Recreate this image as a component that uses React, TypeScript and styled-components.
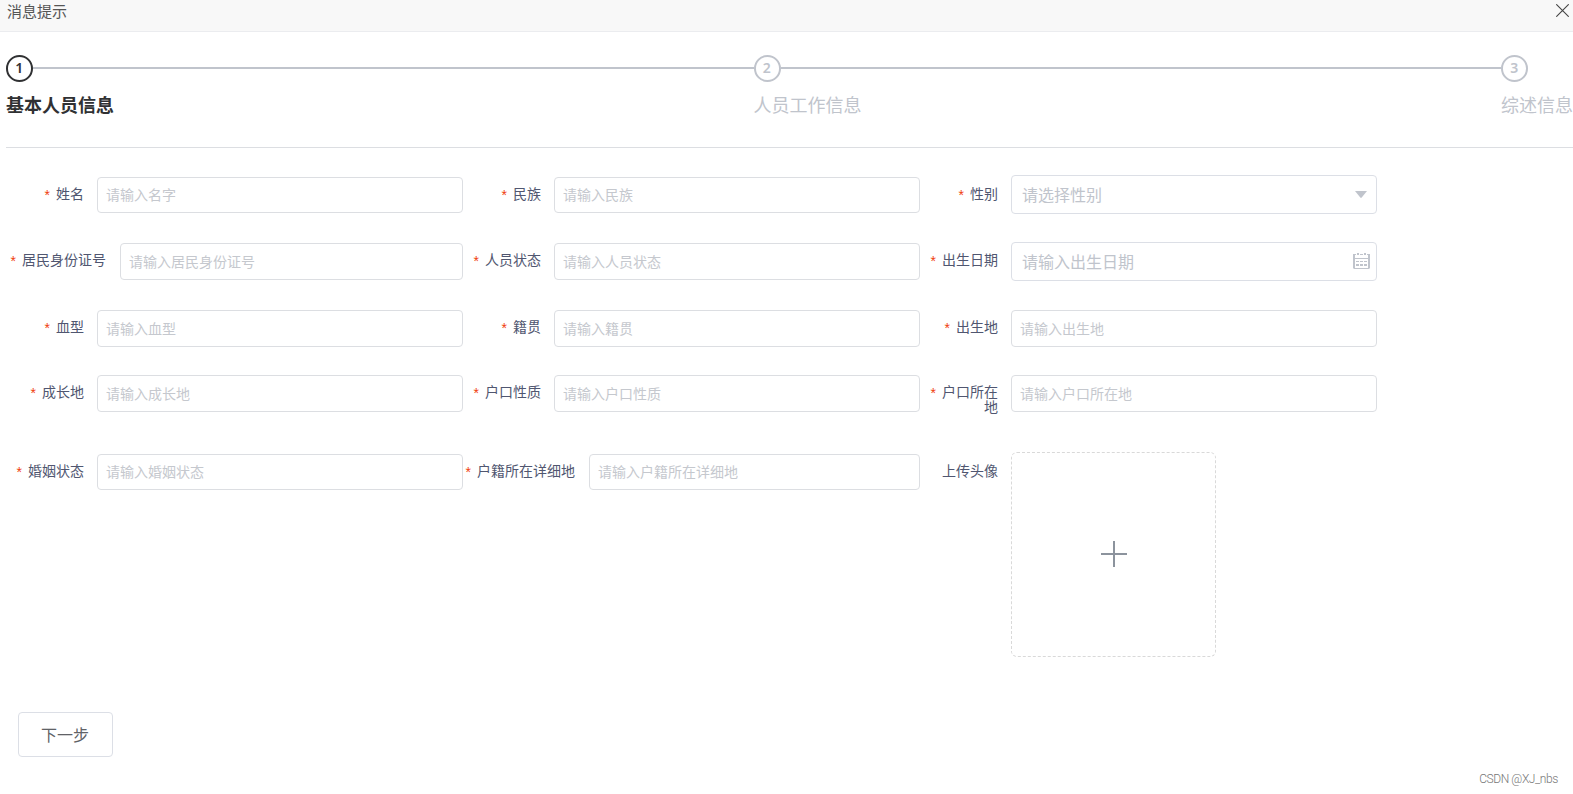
import React from "react";
import styled, { createGlobalStyle } from "styled-components";

const GlobalStyle = createGlobalStyle`
  * { box-sizing: border-box; }
  body {
    margin: 0;
    background: #fff;
    overflow: hidden;
    font-family: "Noto Sans CJK SC", "Liberation Sans", sans-serif;
    font-size: 14px;
    color: #505670;
  }
`;

const Dialog = styled.div`
  display: flex;
  flex-direction: column;
  width: 100%;
  height: 794px;
`;

const Header = styled.header`
  display: flex;
  justify-content: space-between;
  align-items: flex-start;
  height: 32px;
  padding: 4px 4px 0 7px;
  background: #f8f8f8;
  border-bottom: 1px solid #ebecef;
`;

const Title = styled.h1`
  margin: -1px 0 0;
  font-size: 15px;
  line-height: 15px;
  font-weight: 400;
  color: #555;
`;

const CloseButton = styled.button`
  display: flex;
  padding: 0;
  border: 0;
  background: none;
`;

const Body = styled.main`
  display: flex;
  flex-direction: column;
  flex: 1;
  padding-left: 6px;
`;

const Steps = styled.ol`
  display: flex;
  margin: 0;
  padding: 23px 0 0;
  list-style: none;
  height: 115px;
`;

const StepItem = styled.li<{ $active?: boolean; $last?: boolean }>`
  flex: ${(p) => (p.$last ? "0 0 72px" : "1 1 0")};
  color: ${(p) => (p.$active ? "#303133" : "#c0c4cc")};
`;

const StepHead = styled.div`
  display: flex;
  height: 27px;
`;

const StepCircle = styled.span`
  display: flex;
  align-items: center;
  justify-content: center;
  flex: none;
  width: 27.4px;
  height: 27px;
  padding: 0 1px 1px 0;
  border: 2px solid currentColor;
  border-radius: 50%;
  font: 600 14px/1 "Noto Sans", sans-serif;
`;

const StepLine = styled.span`
  flex: 1;
  height: 2px;
  margin-top: 12px;
  background: #c0c4cc;
`;

const StepTitle = styled.div<{ $active?: boolean }>`
  margin-top: 12px;
  font-size: 18px;
  line-height: 20px;
  font-weight: ${(p) => (p.$active ? 700 : 400)};
  white-space: nowrap;
`;

const Divider = styled.hr`
  width: 100%;
  height: 1px;
  margin: 0 0 27px;
  border: 0;
  background: #dcdee2;
`;

const Row = styled.div<{ $height: number }>`
  display: grid;
  grid-template-columns: repeat(3, 457px);
  height: ${(p) => p.$height}px;
`;

const Field = styled.div`
  display: flex;
  align-items: flex-start;
  min-width: 0;
`;

const Label = styled.label<{ $top: number; $width?: number }>`
  flex: none;
  width: ${(p) => p.$width ?? 91}px;
  padding: ${(p) => p.$top}px ${(p) => (p.$width ? 14 : 13)}px 0 0;
  line-height: 15px;
  text-align: right;
`;

const Star = styled.span`
  margin-right: 6px;
  font-family: "Liberation Sans", sans-serif;
  line-height: 0;
  vertical-align: -1px;
  color: #f03c0c;
`;

const TextInput = styled.input<{ $top: number; $height: number }>`
  flex: 1;
  min-width: 0;
  height: ${(p) => p.$height}px;
  margin: ${(p) => p.$top}px 0 0;
  padding: 0 8px 2px;
  border: 1px solid #dcdee2;
  border-radius: 4px;
  font: inherit;
  background: #fff;
  outline: none;
  &::placeholder { color: #c5c8ce; opacity: 1; }
`;

const PickerBox = styled.div`
  display: flex;
  flex: 1;
  align-items: center;
  justify-content: space-between;
  height: 39px;
  padding: 0 6px 2px 10px;
  border: 1px solid #dcdfe6;
  border-radius: 4px;
  font-size: 16px;
  line-height: 20px;
  color: #c0c4cc;
`;

const Caret = styled.svg`
  margin: 2px 3px 0 0;
`;

const Calendar = styled.svg`
  margin-top: 1px;
`;

const Upload = styled.div`
  display: flex;
  align-items: center;
  justify-content: center;
  width: 205px;
  height: 205px;
  padding-bottom: 2px;
  border: 1px dashed #d9d9d9;
  border-radius: 6px;
`;

const Footer = styled.footer`
  display: flex;
  justify-content: space-between;
  align-items: flex-start;
  padding: 55px 15px 0 12px;
`;

const NextButton = styled.button`
  width: 95px;
  height: 45px;
  padding: 0 1px 2px 0;
  border: 1px solid #dcdfe6;
  border-radius: 4px;
  background: #fff;
  font: 16px "Noto Sans CJK SC", sans-serif;
  color: #606266;
`;

const Watermark = styled.span`
  display: flex;
  justify-content: flex-end;
  width: 79px;
  margin-top: 60px;
  font: 300 12px/15px Roboto, sans-serif;
  letter-spacing: -0.4px;
  white-space: nowrap;
  color: #777;
`;

type FieldSpec = {
  label: string;
  placeholder?: string;
  kind?: "select" | "date" | "upload";
  labelWidth?: number;
};

type RowSpec = {
  height: number;
  labelTop: number;
  inputTop: number;
  inputHeight: number;
  fields: FieldSpec[];
};

const rows: RowSpec[] = [
  {
    height: 67, labelTop: 11, inputTop: 2, inputHeight: 36,
    fields: [
      { label: "姓名", placeholder: "请输入名字" },
      { label: "民族", placeholder: "请输入民族" },
      { label: "性别", placeholder: "请选择性别", kind: "select" },
    ],
  },
  {
    height: 67, labelTop: 10, inputTop: 1, inputHeight: 37,
    fields: [
      { label: "居民身份证号", placeholder: "请输入居民身份证号", labelWidth: 114 },
      { label: "人员状态", placeholder: "请输入人员状态" },
      { label: "出生日期", placeholder: "请输入出生日期", kind: "date" },
    ],
  },
  {
    height: 65, labelTop: 10, inputTop: 1, inputHeight: 37,
    fields: [
      { label: "血型", placeholder: "请输入血型" },
      { label: "籍贯", placeholder: "请输入籍贯" },
      { label: "出生地", placeholder: "请输入出生地" },
    ],
  },
  {
    height: 78, labelTop: 10, inputTop: 1, inputHeight: 37,
    fields: [
      { label: "成长地", placeholder: "请输入成长地" },
      { label: "户口性质", placeholder: "请输入户口性质" },
      { label: "户口所在地", placeholder: "请输入户口所在地" },
    ],
  },
  {
    height: 205, labelTop: 11, inputTop: 2, inputHeight: 36,
    fields: [
      { label: "婚姻状态", placeholder: "请输入婚姻状态" },
      { label: "户籍所在详细地", placeholder: "请输入户籍所在详细地", labelWidth: 126 },
      { label: "上传头像", kind: "upload" },
    ],
  },
];

const steps = ["基本人员信息", "人员工作信息", "综述信息"];

function Control({ field, row }: { field: FieldSpec; row: RowSpec }) {
  if (field.kind === "select") {
    return (
      <PickerBox>
        {field.placeholder}
        <Caret width="12" height="7" viewBox="0 0 12 7">
          <path d="M0 0h12L6.7 6.6q-.7.7-1.4 0z" fill="currentColor" />
        </Caret>
      </PickerBox>
    );
  }
  if (field.kind === "date") {
    return (
      <PickerBox>
        {field.placeholder}
        <Calendar width="17" height="16" viewBox="0 0 17 16" fill="currentColor">
          <path d="M0 1h3v1H2v13h13V2h-1V1h3v14l-1 1H1l-1-1zM4 0h2v2H4zM11 0h2v2h-2zM7 1h3v1H7zM2 5h13v1H2zM3 8h3v1H3zM7 8h3v1H7zM11 8h3v1h-3zM3 11h3v2H3zM7 11h3v2H7zM11 11h3v2h-3z" />
        </Calendar>
      </PickerBox>
    );
  }
  if (field.kind === "upload") {
    return (
      <Upload>
        <svg width="27" height="26" viewBox="0 0 27 26">
          <path d="M1 12h26v2H1zM13 0h2v26h-2z" fill="#8c939d" />
        </svg>
      </Upload>
    );
  }
  return <TextInput $top={row.inputTop} $height={row.inputHeight} placeholder={field.placeholder} />;
}

export default function App() {
  return (
    <Dialog>
      <GlobalStyle />
      <Header>
        <Title>消息提示</Title>
        <CloseButton aria-label="关闭">
          <svg width="13" height="13" viewBox="0 0 13 13">
            <path d="M.3.3l12.4 12.4M12.7.3L.3 12.7" stroke="#444" strokeWidth="1.1" />
          </svg>
        </CloseButton>
      </Header>
      <Body>
        <Steps>
          {steps.map((title, i) => (
            <StepItem key={title} $active={i === 0} $last={i === steps.length - 1}>
              <StepHead>
                <StepCircle>{i + 1}</StepCircle>
                {i < steps.length - 1 && <StepLine />}
              </StepHead>
              <StepTitle $active={i === 0}>{title}</StepTitle>
            </StepItem>
          ))}
        </Steps>
        <Divider />
        {rows.map((row) => (
          <Row key={row.fields[0].label} $height={row.height}>
            {row.fields.map((field) => (
              <Field key={field.label}>
                <Label $top={row.labelTop} $width={field.labelWidth}>
                  {field.kind !== "upload" && <Star>*</Star>}
                  {field.label}
                </Label>
                <Control field={field} row={row} />
              </Field>
            ))}
          </Row>
        ))}
        <Footer>
          <NextButton>下一步</NextButton>
          <Watermark>CSDN @XJ_nbs</Watermark>
        </Footer>
      </Body>
    </Dialog>
  );
}
